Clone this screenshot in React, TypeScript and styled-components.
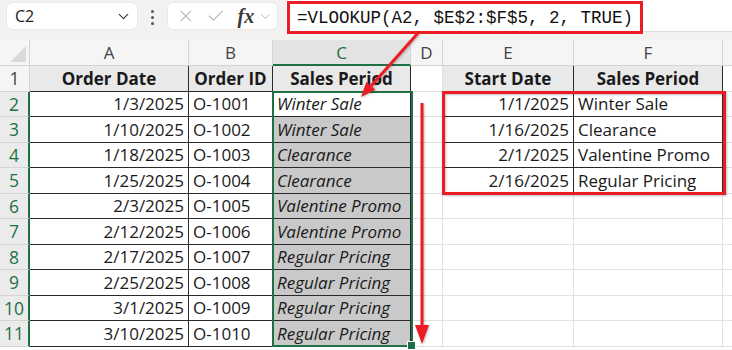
import React from "react";
import styled, { createGlobalStyle } from "styled-components";
import { ChevronDown, X, Check } from "lucide-react";

const GREEN = "#1e7145";
const GRID = "#e1e1e1";
const HEAD_LINE = "#d4d4d4";
const RED = "#ec1c24";

const GlobalStyle = createGlobalStyle`
  html, body { margin: 0; padding: 0; background: #fff; }
  body { font-family: "Open Sans", "Liberation Sans", sans-serif; color: #1a1a1a; }
  * { box-sizing: border-box; }
`;

const Page = styled.div`
  position: relative;
  width: 732px;
  height: 350px;
  overflow: hidden;
  background: #fff;
`;

const TopBar = styled.div`
  display: flex;
  align-items: flex-start;
  height: 40px;
  padding-left: 6px;
  background: #f3f2f1;
`;

const NameBox = styled.div`
  margin-top: 2px;
  width: 132px;
  height: 28px;
  display: flex;
  align-items: center;
  justify-content: space-between;
  padding: 0 5px 0 8px;
  background: #fff;
  border: 1px solid #e8e8e8;
  border-radius: 6px;
  font-size: 16px;
  color: #222;
`;

const Dots = styled.div`
  margin: 10px 0 0 13px;
  width: 4px;
  display: flex;
  flex-direction: column;
  gap: 3px;
  span {
    width: 3px;
    height: 3px;
    border-radius: 50%;
    background: #555;
  }
`;

const IconBox = styled.div`
  margin: 2px 0 0 12px;
  width: 111px;
  height: 28px;
  display: flex;
  align-items: center;
  gap: 10px;
  padding: 0 4px 0 8px;
  background: #fff;
  border: 1px solid #e8e8e8;
  border-radius: 6px;
  color: #b4b4b4;
`;

const Fx = styled.span`
  font-family: "Liberation Serif", serif;
  font-style: italic;
  font-weight: 700;
  font-size: 20px;
  color: #3a3a3a;
  margin-left: 2px;
`;

const FormulaArea = styled.div`
  flex: 1;
  margin-left: 8px;
  height: 32px;
  background: #fff;
  border-bottom: 1px solid #dedede;
`;

const Highlight = styled.div`
  margin: 1px 0 0 1px;
  width: 356px;
  height: 33px;
  display: flex;
  align-items: center;
  padding-left: 7px;
  border: 3px solid ${RED};
  background: #fff;
  font-family: "Liberation Mono", "DejaVu Sans Mono", monospace;
  font-size: 17.5px;
  color: #111;
  white-space: pre;
`;

const Sheet = styled.div`
  position: relative;
  display: grid;
  grid-template-columns: 30px 159px 84px 138px 32px 131px 149px 20px;
  grid-template-rows: 26px repeat(11, 25.5px);
`;

const Corner = styled.div`
  position: relative;
  background: #f5f5f5;
  border-right: 1px solid ${HEAD_LINE};
  border-bottom: 1px solid ${HEAD_LINE};
  &::after {
    content: "";
    position: absolute;
    right: 3px;
    bottom: 3px;
    border-style: solid;
    border-width: 0 0 16px 16px;
    border-color: transparent transparent #dadada transparent;
  }
`;

const ColHead = styled.div<{ $active?: boolean }>`
  display: flex;
  align-items: center;
  justify-content: center;
  background: ${(p) => (p.$active ? "#e3e3e3" : "#f5f5f5")};
  border-right: 1px solid ${HEAD_LINE};
  border-bottom: ${(p) => (p.$active ? `2px solid ${GREEN}` : `1px solid ${HEAD_LINE}`)};
  color: ${(p) => (p.$active ? GREEN : "#444")};
  font-size: 17px;
`;

const RowNum = styled.div<{ $active?: boolean }>`
  display: flex;
  align-items: center;
  justify-content: center;
  background: ${(p) => (p.$active ? "#ebebeb" : "#f5f5f5")};
  border-right: ${(p) => (p.$active ? `2px solid ${GREEN}` : `1px solid ${HEAD_LINE}`)};
  border-bottom: 1px solid ${HEAD_LINE};
  color: ${(p) => (p.$active ? GREEN : "#444")};
  font-size: 17.5px;
`;

const Cell = styled.div<{
  $table?: boolean;
  $head?: boolean;
  $italic?: boolean;
  $right?: boolean;
  $fill?: string;
}>`
  display: flex;
  align-items: center;
  justify-content: ${(p) => (p.$head ? "center" : p.$right ? "flex-end" : "flex-start")};
  padding: 0 4px;
  overflow: hidden;
  white-space: nowrap;
  background: ${(p) => p.$fill || (p.$head ? "#e9e9e9" : "#fff")};
  border-right: 1px solid ${(p) => (p.$table ? "#2a2a2a" : GRID)};
  border-bottom: 1px solid ${(p) => (p.$table ? "#2a2a2a" : GRID)};
  font-size: 17px;
  font-weight: ${(p) => (p.$head ? 700 : 400)};
  font-style: ${(p) => (p.$italic ? "italic" : "normal")};
  color: #1a1a1a;
`;

const Selection = styled.div`
  position: absolute;
  left: 272px;
  top: 51px;
  width: 141px;
  height: 256px;
  border: 2px solid ${GREEN};
  pointer-events: none;
  &::after {
    content: "";
    position: absolute;
    right: -5px;
    bottom: -5px;
    width: 7px;
    height: 7px;
    background: ${GREEN};
    border: 1px solid #fff;
  }
`;

const Marks = styled.svg`
  position: absolute;
  left: 0;
  top: 0;
  pointer-events: none;
  filter: drop-shadow(1px 1px 1px rgba(0, 0, 0, 0.25));
`;

const orders = [
  ["1/3/2025", "O-1001", "Winter Sale"],
  ["1/10/2025", "O-1002", "Winter Sale"],
  ["1/18/2025", "O-1003", "Clearance"],
  ["1/25/2025", "O-1004", "Clearance"],
  ["2/3/2025", "O-1005", "Valentine Promo"],
  ["2/12/2025", "O-1006", "Valentine Promo"],
  ["2/17/2025", "O-1007", "Regular Pricing"],
  ["2/25/2025", "O-1008", "Regular Pricing"],
  ["3/1/2025", "O-1009", "Regular Pricing"],
  ["3/10/2025", "O-1010", "Regular Pricing"],
];

const periods = [
  ["1/1/2025", "Winter Sale"],
  ["1/16/2025", "Clearance"],
  ["2/1/2025", "Valentine Promo"],
  ["2/16/2025", "Regular Pricing"],
];

const letters = ["A", "B", "C", "D", "E", "F", ""];

export default function App() {
  const rows: React.ReactNode[] = [];

  for (let r = 0; r < 11; r++) {
    const order = r > 0 ? orders[r - 1] : null;
    const period = r > 0 ? periods[r - 1] : null;
    const head = r === 0;
    rows.push(
      <RowNum key={`n${r}`} $active={r > 0}>
        {r + 1}
      </RowNum>,
      <Cell key={`a${r}`} $table $head={head} $right>
        {head ? "Order Date" : order![0]}
      </Cell>,
      <Cell key={`b${r}`} $table $head={head}>
        {head ? "Order ID" : order![1]}
      </Cell>,
      <Cell
        key={`c${r}`}
        $table
        $head={head}
        $italic={!head}
        $fill={r > 1 ? "#c9c9c9" : undefined}
      >
        {head ? "Sales Period" : order![2]}
      </Cell>,
      <Cell key={`d${r}`} />,
      <Cell key={`e${r}`} $table={r < 5} $head={head} $right>
        {head ? "Start Date" : period ? period[0] : ""}
      </Cell>,
      <Cell key={`f${r}`} $table={r < 5} $head={head}>
        {head ? "Sales Period" : period ? period[1] : ""}
      </Cell>,
      <Cell key={`g${r}`} />
    );
  }

  return (
    <Page>
      <GlobalStyle />
      <TopBar>
        <NameBox>
          C2
          <ChevronDown size={17} strokeWidth={1.6} color="#333" />
        </NameBox>
        <Dots>
          <span />
          <span />
          <span />
        </Dots>
        <IconBox>
          <X size={20} strokeWidth={1.3} />
          <Check size={20} strokeWidth={1.3} />
          <Fx>fx</Fx>
          <ChevronDown size={15} strokeWidth={1.5} style={{ marginLeft: -6 }} />
        </IconBox>
        <FormulaArea>
          <Highlight>=VLOOKUP(A2, $E$2:$F$5, 2, TRUE)</Highlight>
        </FormulaArea>
      </TopBar>
      <Sheet>
        <Corner />
        {letters.map((l) => (
          <ColHead key={l || "g"} $active={l === "C"}>
            {l}
          </ColHead>
        ))}
        {rows}
        <Selection />
      </Sheet>
      <Marks width="732" height="350" viewBox="0 0 732 350">
        <line x1="418" y1="33" x2="371" y2="86" stroke={RED} strokeWidth="3" />
        <polygon points="361,97 375.4,89.7 366.4,81.7" fill={RED} />
        <line x1="422" y1="103" x2="422" y2="327" stroke={RED} strokeWidth="3" />
        <polygon points="415,325 429,325 422,344" fill={RED} />
        <rect x="443.5" y="92.5" width="281" height="101" fill="none" stroke={RED} strokeWidth="3" />
      </Marks>
    </Page>
  );
}
